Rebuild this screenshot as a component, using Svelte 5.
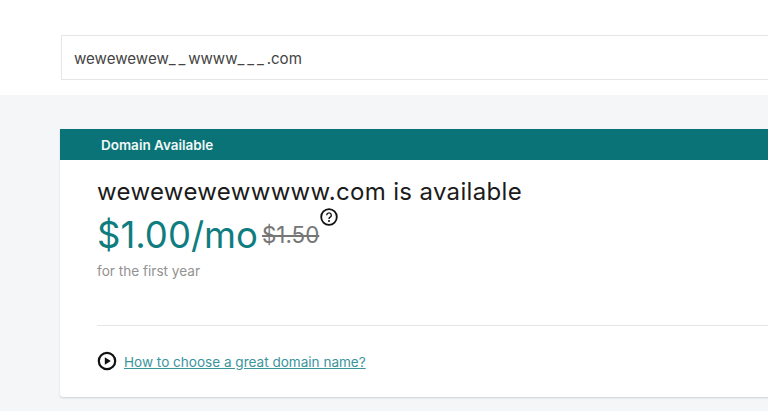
<script>
  const domain = "wewewewewwwww.com";
</script>

<div class="page">
  <section class="search">
    <div class="input"><span>wewewewew<span class="us">__</span>wwww<span class="us">___</span>.com</span></div>
  </section>
  <section class="results">
    <div class="card">
      <div class="banner">Domain Available</div>
      <div class="body">
        <h2>{domain} is available</h2>
        <div class="price">
          <span class="now">$1.00/mo</span>
          <s class="old">$1.50</s>
          <svg class="help" width="18" height="18" viewBox="0 0 18 18" fill="none">
            <circle cx="9" cy="9" r="7.8" stroke="#111" stroke-width="1.8" />
            <path d="M6.7 7.2a2.3 2.3 0 1 1 3.5 2c-.8.5-1.2.9-1.2 1.7" stroke="#111" stroke-width="1.4" />
            <circle cx="9" cy="13" r="1" fill="#111" />
          </svg>
        </div>
        <div class="term">for the first year</div>
        <hr />
        <div class="help-link">
          <svg class="play" width="20" height="20" viewBox="0 0 20 20" fill="none">
            <circle cx="10" cy="10" r="8.2" stroke="#111" stroke-width="2.2" />
            <path d="M7.8 6.2v7.6l6-3.8z" fill="#111" />
          </svg>
          <a href="#help">How to choose a great domain name?</a>
        </div>
      </div>
    </div>
  </section>
</div>

<style>
  :global(body) {
    margin: 0;
    overflow: hidden;
    background: #fff;
    font-family: Inter, "Liberation Sans", sans-serif;
  }
  .page {
    width: 768px;
    height: 411px;
    overflow: hidden;
    display: flex;
    flex-direction: column;
  }
  .search {
    height: 95px;
    box-sizing: border-box;
    padding: 35px 0 0 61px;
    flex: none;
  }
  .input {
    width: 900px;
    height: 45px;
    box-sizing: border-box;
    border: 1px solid #e4e7ea;
    padding: 1px 0 0 12px;
    display: flex;
    align-items: center;
    font-size: 15.1px;
    color: #444;
  }
  .us {
    letter-spacing: 2.8px;
  }
  .results {
    flex: 1;
    background: #f4f6f8;
    padding: 34px 0 0 60px;
  }
  .card {
    width: 900px;
    height: 268px;
    background: #fff;
    border-radius: 0 0 3px 3px;
    box-shadow: 0 1px 2px rgba(0, 0, 0, 0.16);
  }
  .banner {
    height: 31px;
    background: #0a7377;
    color: #f2f8f8;
    font-size: 13.5px;
    font-weight: 600;
    line-height: 32px;
    padding-left: 41px;
  }
  .body {
    padding: 17px 0 0 37px;
  }
  h2 {
    margin: 0;
    font-size: 24px;
    font-weight: 400;
    line-height: 30px;
    letter-spacing: 0.33px;
    color: #1b1b1b;
  }
  .price {
    display: flex;
    align-items: flex-start;
    height: 50px;
    margin-top: 1px;
  }
  .now {
    font-size: 36.5px;
    line-height: 54px;
    color: #0f7d80;
  }
  .old {
    font-size: 22.4px;
    line-height: 54px;
    margin-left: 4px;
    color: #767676;
  }
  .help {
    margin: 0 0 0 1px;
  }
  .term {
    font-size: 13.6px;
    line-height: 18px;
    color: #929292;
    margin-top: 4px;
  }
  hr {
    border: 0;
    border-top: 1px solid #e4e6e8;
    margin: 45px 0 0;
  }
  .help-link {
    display: flex;
    align-items: flex-start;
    gap: 7px;
    margin-top: 25px;
  }
  a {
    font-size: 13.55px;
    line-height: 22px;
    color: #3a949b;
  }
</style>
